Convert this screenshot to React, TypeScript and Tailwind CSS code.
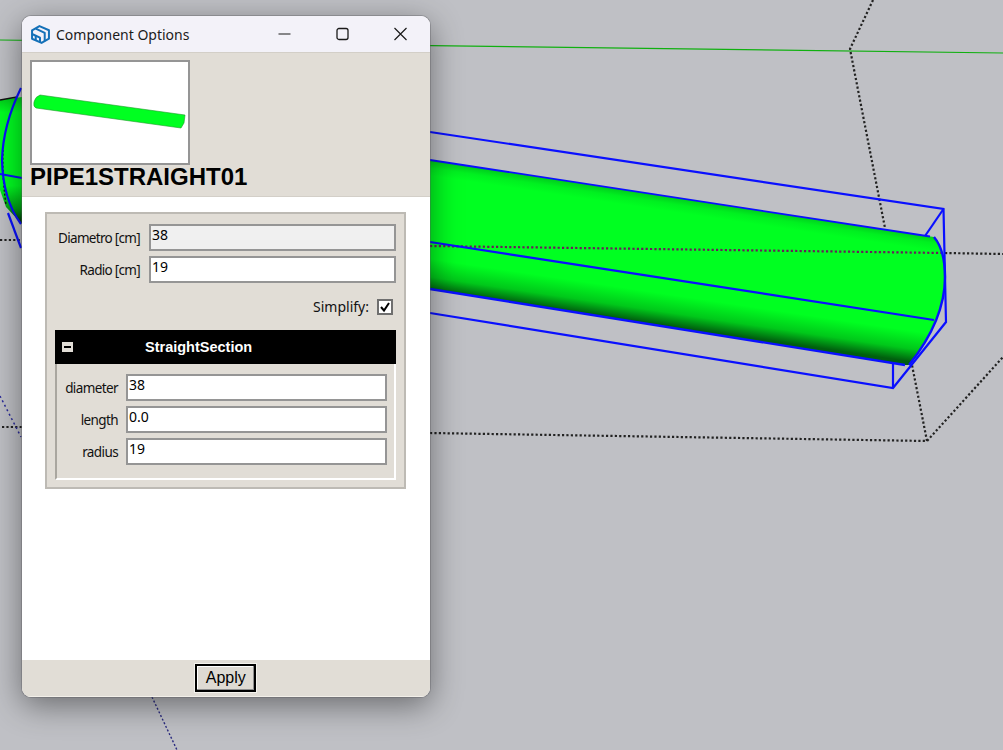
const labelFont = "font-['Noto_Sans','Liberation_Sans',sans-serif]";

function Scene() {
  return (
    <svg className="absolute inset-0" width="1003" height="750" viewBox="0 0 1003 750">
      <defs>
        <linearGradient id="pipe" gradientUnits="userSpaceOnUse" x1="430" y1="160" x2="411" y2="287">
          <stop offset="0" stopColor="#00c81c" />
          <stop offset="0.06" stopColor="#00f020" />
          <stop offset="0.12" stopColor="#00ff21" />
          <stop offset="0.76" stopColor="#00ff21" />
          <stop offset="0.9" stopColor="#00c81a" />
          <stop offset="1" stopColor="#005f0e" />
        </linearGradient>
        <linearGradient id="pipeLeft" gradientUnits="userSpaceOnUse" x1="10" y1="97" x2="10" y2="224">
          <stop offset="0" stopColor="#00c81a" />
          <stop offset="0.12" stopColor="#00ff21" />
          <stop offset="0.7" stopColor="#00ff21" />
          <stop offset="0.88" stopColor="#00a014" />
          <stop offset="1" stopColor="#002a06" />
        </linearGradient>
      </defs>
      <line x1="0" y1="40" x2="1003" y2="53" stroke="#10b010" strokeWidth="1.2" />
      {/* dotted guides */}
      <g fill="none" stroke="#222" strokeWidth="2.2" strokeDasharray="2.2 2.2">
        <path d="M873 0L850 49L885 228" />
        <path d="M945 253L1003 254" />
        <path d="M430 433L927 441L1003 357" />
        <path d="M927 441L912 365" />
        <path d="M0 240H22" />
        <path d="M2 427H22" />
      </g>
      <path d="M152 697L177 750" fill="none" stroke="#2b2b80" strokeWidth="1.4" strokeDasharray="2 2" />
      <path d="M0 396L21 437" fill="none" stroke="#2a2a9a" strokeWidth="1.5" strokeDasharray="2 3" />
      {/* pipe body */}
      <path d="M430 160L934 237Q945 250 945 277Q945 320 909 365L905 365L430 289Z" fill="url(#pipe)" />
      <path d="M430 246L945 253" fill="none" stroke="#6a1c5c" strokeWidth="2.2" strokeDasharray="2.2 2.2" />
      <path d="M430 160L930 236.5" fill="none" stroke="#0a10ff" strokeWidth="1.8" />
      <path d="M430 289L905 365" fill="none" stroke="#0a10ff" strokeWidth="2.4" />
      <path d="M430 242L934 320" fill="none" stroke="#0a10ff" strokeWidth="2.2" />
      <path d="M934 237Q945 250 945 277Q945 320 909 365" fill="none" stroke="#0a10ff" strokeWidth="2.4" />
      {/* bounding box */}
      <g fill="none" stroke="#0a10ff" strokeWidth="2.2">
        <path d="M430 132L943.5 209L946 322L893 388L430 313" />
        <path d="M943.5 209L925 236" />
        <path d="M893 363V388" />
      </g>
      {/* left end of pipe */}
      <path d="M0 100L22 97V224L6 207L0 190Z" fill="url(#pipeLeft)" />
      <path d="M0 100L17 97" fill="none" stroke="#111" strokeWidth="1.6" />
      <path d="M3 150Q2 175 6 205" fill="none" stroke="#111" strokeWidth="1.4" strokeDasharray="2 2" />
      <g fill="none" stroke="#0a10ff" strokeWidth="2.2">
        <path d="M21 88Q3 125 2 160Q3 200 21 224" />
        <path d="M0 174L22 178" />
        <path d="M8 213L21 248" />
      </g>
    </svg>
  );
}

function SketchUpLogo() {
  return (
    <svg width="19" height="19" viewBox="0 0 18 18" fill="none" stroke="#1571b8" strokeWidth="1.9" strokeLinejoin="round">
      <path d="M1 5L8 1L17 5V13L10 17L1 13Z" />
      <path d="M4.5 3.5L13 7.5V15.5" />
      <path d="M1 8.5L8.5 12V16.5" />
      <path d="M4.5 10.5V14.5" />
    </svg>
  );
}

function Field({ value, disabled, className }: { value: string; disabled?: boolean; className: string }) {
  return (
    <div
      className={`h-[27px] border-2 border-[#959595] pl-[1px] pt-[1px] text-[14px] leading-[16px] text-black ${disabled ? "bg-[#f0f0f0]" : "bg-white"} ${className}`}
    >
      {value}
    </div>
  );
}

function LabelRow({ label, value, disabled }: { label: string; value: string; disabled?: boolean }) {
  return (
    <div className="flex items-center">
      <span className="w-[94px] shrink-0 whitespace-nowrap pr-[9px] pt-[2px] text-right text-[13.5px] tracking-[-0.7px] text-[#111]">{label}</span>
      <Field value={value} disabled={disabled} className="w-[247px]" />
    </div>
  );
}

function SectionRow({ label, value }: { label: string; value: string }) {
  return (
    <div className="flex items-center">
      <span className="w-[62px] shrink-0 whitespace-nowrap pr-[8px] pt-[2px] text-right text-[13.5px] tracking-[-0.6px] text-[#111]">{label}</span>
      <Field value={value} className="w-[261px]" />
    </div>
  );
}

function WindowButtons() {
  return (
    <div className="flex items-center gap-[45px] pr-[23px]">
      <svg width="13" height="14" viewBox="0 0 13 14" stroke="#1a1a1a" strokeWidth="1.2" fill="none">
        <path d="M0.5 7H12.5" />
      </svg>
      <svg width="13" height="14" viewBox="0 0 13 14" stroke="#1a1a1a" strokeWidth="1.3" fill="none">
        <rect x="1" y="1.5" width="11" height="11" rx="2" />
      </svg>
      <svg width="13" height="14" viewBox="0 0 13 14" stroke="#1a1a1a" strokeWidth="1.2" fill="none">
        <path d="M0.5 1L12.5 13M12.5 1L0.5 13" />
      </svg>
    </div>
  );
}

function Thumbnail() {
  return (
    <div className="h-[105px] w-[160px] border-2 border-[#959595] bg-white">
      <svg width="156" height="101" viewBox="0 0 156 101">
        <path d="M8 33L153 53L152 61L149 66L4 46Q1 45 2 40Q3 35 8 33Z" fill="#00ff21" stroke="#1f9a2a" strokeWidth="0.6" />
      </svg>
    </div>
  );
}

export default function App() {
  return (
    <div className="relative h-[750px] w-[1003px] overflow-hidden bg-[#bfc0c5]">
      <Scene />
      <div
        className={`absolute left-[22px] top-[16px] flex h-[681px] w-[407.5px] flex-col overflow-hidden rounded-[9px] bg-white shadow-[0_0_0_1px_rgba(90,90,95,0.35),0_8px_32px_rgba(0,0,0,0.45)] ${labelFont}`}
      >
        <div className="flex h-[36px] shrink-0 items-center justify-between bg-[#f3f2f9] pl-[9px]">
          <div className="flex items-center gap-[6px]">
            <SketchUpLogo />
            <span className="text-[14px] text-[#1b1b1b]">Component Options</span>
          </div>
          <WindowButtons />
        </div>
        <div className="h-[145px] shrink-0 border-y border-y-[#d3cfc8] bg-[#e1ddd6] pl-[8px] pt-[7px]">
          <Thumbnail />
          <div className="font-['Liberation_Sans',Arial,sans-serif] text-[24px] leading-[23px] font-bold text-black">PIPE1STRAIGHT01</div>
        </div>
        <div className="min-h-0 flex-1 bg-white pl-[23px] pt-[15px]">
          <div className="h-[277px] w-[361px] border-2 border-[#bdbab4] bg-[#e1ddd6] pl-[8px] pt-[10px]">
            <div className="flex flex-col gap-[5px]">
              <LabelRow label="Diametro [cm]" value="38" disabled />
              <LabelRow label="Radio [cm]" value="19" />
            </div>
            <div className="mt-[13px] flex h-[21px] items-center justify-end gap-[8px] pr-[11px] text-[14px] text-[#111]">
              <span>Simplify:</span>
              <span className="flex h-[16px] w-[16px] items-center justify-center border-2 border-[#6f6f6f] bg-white">
                <svg width="12" height="12" viewBox="0 0 12 12" fill="none" stroke="#000" strokeWidth="2">
                  <path d="M2 6L5 9.5L10 2" />
                </svg>
              </span>
            </div>
            <div className="mt-[13px] w-[341px]">
              <div className="flex h-[34px] items-center bg-black pl-[7px] font-['Liberation_Sans',Arial,sans-serif]">
                <span className="flex h-[10px] w-[11px] items-center justify-center bg-[#e1ddd6]">
                  <span className="h-[2px] w-[7px] bg-black" />
                </span>
                <span className="ml-[72px] pt-[2px] text-[14.5px] font-bold text-white">StraightSection</span>
              </div>
              <div className="flex h-[116px] flex-col gap-[5px] border-r-2 border-b-2 border-l-2 border-r-white border-b-white border-l-[#a9a69f] pl-[7px] pt-[10px]">
                <SectionRow label="diameter" value="38" />
                <SectionRow label="length" value="0.0" />
                <SectionRow label="radius" value="19" />
              </div>
            </div>
          </div>
        </div>
        <div className="flex h-[37px] shrink-0 items-center justify-center border-b border-b-[#f2efe9] bg-[#e1ddd6]">
          <div className="flex h-[28px] w-[61px] items-center justify-center border-2 border-black bg-[#dedad3] font-['Liberation_Sans',Arial,sans-serif] text-[16px] text-black shadow-[0_0_0_1px_#f5f3ee,inset_-1px_-1px_0_#8e8e8e,inset_1px_1px_0_#fff]">
            Apply
          </div>
        </div>
      </div>
    </div>
  );
}
